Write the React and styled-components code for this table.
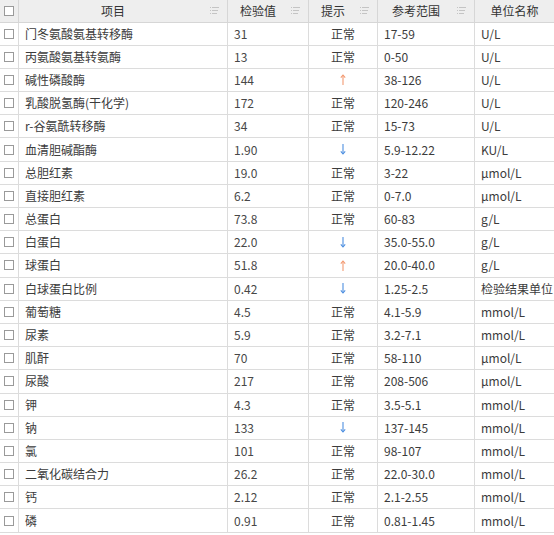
import styled, { createGlobalStyle } from 'styled-components';

const GlobalStyle = createGlobalStyle`
  html, body {
    margin: 0;
    padding: 0;
    background: #ffffff;
  }
  body {
    font-family: "Noto Sans CJK SC", "Noto Sans", sans-serif;
    font-size: 12px;
    color: #3c3c3c;
  }
`;

const COLS = '19px 209px 81px 69px 97px 1fr';

const Table = styled.div`
  width: 554px;
  display: flex;
  flex-direction: column;
`;

const HeaderRow = styled.div`
  display: grid;
  grid-template-columns: ${COLS};
  height: 22.5px;
  box-sizing: border-box;
  background: #eeeeee;
  border-bottom: 1px solid #d6d6d6;
`;

const Row = styled.div`
  display: grid;
  grid-template-columns: ${COLS};
  height: 23.2px;
  box-sizing: border-box;
  border-bottom: 1px solid #dcdcdc;
`;

const Cell = styled.div`
  display: flex;
  align-items: center;
  justify-content: ${(p) => (p.$center ? 'center' : 'flex-start')};
  padding: 0 ${(p) => (p.$center ? '0' : '6px')};
  border-right: ${(p) => (p.$last ? 'none' : '1px solid #dcdcdc')};
  white-space: nowrap;
  overflow: hidden;
  line-height: 1;
`;

const HeadCell = styled.div`
  position: relative;
  display: flex;
  align-items: center;
  justify-content: center;
  padding-right: ${(p) => (p.$sortable ? '20px' : '0')};
  border-right: ${(p) => (p.$last ? 'none' : '1px solid #d6d6d6')};
  white-space: nowrap;
  color: #333;
`;

const Check = styled.span`
  display: block;
  width: 8px;
  height: 8px;
  border: 1px solid #9a9a9a;
  background: #ffffff;
  margin: 0 auto;
`;

const SortIcon = styled.svg`
  position: absolute;
  right: 8px;
  top: 50%;
  margin-top: -4px;
`;

const ValueCell = styled(Cell)`
  color: #474747;
`;

const Sort = () => (
  <SortIcon width="9" height="8" viewBox="0 0 9 8">
    <g fill="#c4c4c4">
      <rect x="0" y="0" width="1" height="1" />
      <rect x="2" y="0" width="7" height="1" />
      <rect x="0" y="3" width="1" height="1" />
      <rect x="2" y="3" width="6" height="1" />
      <rect x="0" y="6" width="1" height="1" />
      <rect x="2" y="6" width="5" height="1" />
    </g>
  </SortIcon>
);

const Arrow = ({ up }) => {
  const color = up ? '#f39a72' : '#4d8fe0';
  return (
    <svg width="6" height="11" viewBox="0 0 6 11">
      {up ? (
        <g fill="none" stroke={color} strokeWidth="1.1">
          <line x1="3" y1="1" x2="3" y2="11" />
          <polyline points="0.8,3.6 3,1 5.2,3.6" />
        </g>
      ) : (
        <g fill="none" stroke={color} strokeWidth="1.1">
          <line x1="3" y1="0" x2="3" y2="10" />
          <polyline points="0.8,7.4 3,10 5.2,7.4" />
        </g>
      )}
    </svg>
  );
};

const rows = [
  ['门冬氨酸氨基转移酶', '31', 'n', '17-59', 'U/L'],
  ['丙氨酸氨基转氨酶', '13', 'n', '0-50', 'U/L'],
  ['碱性磷酸酶', '144', 'up', '38-126', 'U/L'],
  ['乳酸脱氢酶(干化学)', '172', 'n', '120-246', 'U/L'],
  ['r-谷氨酰转移酶', '34', 'n', '15-73', 'U/L'],
  ['血清胆碱酯酶', '1.90', 'down', '5.9-12.22', 'KU/L'],
  ['总胆红素', '19.0', 'n', '3-22', 'μmol/L'],
  ['直接胆红素', '6.2', 'n', '0-7.0', 'μmol/L'],
  ['总蛋白', '73.8', 'n', '60-83', 'g/L'],
  ['白蛋白', '22.0', 'down', '35.0-55.0', 'g/L'],
  ['球蛋白', '51.8', 'up', '20.0-40.0', 'g/L'],
  ['白球蛋白比例', '0.42', 'down', '1.25-2.5', '检验结果单位'],
  ['葡萄糖', '4.5', 'n', '4.1-5.9', 'mmol/L'],
  ['尿素', '5.9', 'n', '3.2-7.1', 'mmol/L'],
  ['肌酐', '70', 'n', '58-110', 'μmol/L'],
  ['尿酸', '217', 'n', '208-506', 'μmol/L'],
  ['钾', '4.3', 'n', '3.5-5.1', 'mmol/L'],
  ['钠', '133', 'down', '137-145', 'mmol/L'],
  ['氯', '101', 'n', '98-107', 'mmol/L'],
  ['二氧化碳结合力', '26.2', 'n', '22.0-30.0', 'mmol/L'],
  ['钙', '2.12', 'n', '2.1-2.55', 'mmol/L'],
  ['磷', '0.91', 'n', '0.81-1.45', 'mmol/L'],
];

export default function App() {
  return (
    <>
      <GlobalStyle />
      <Table>
        <HeaderRow>
          <HeadCell><Check /></HeadCell>
          <HeadCell $sortable>项目<Sort /></HeadCell>
          <HeadCell $sortable>检验值<Sort /></HeadCell>
          <HeadCell $sortable>提示<Sort /></HeadCell>
          <HeadCell $sortable>参考范围<Sort /></HeadCell>
          <HeadCell $last>单位名称</HeadCell>
        </HeaderRow>
        {rows.map(([name, value, flag, range, unit]) => (
          <Row key={name}>
            <Cell $center><Check /></Cell>
            <Cell>{name}</Cell>
            <ValueCell>{value}</ValueCell>
            <Cell $center>
              {flag === 'n' ? '正常' : <Arrow up={flag === 'up'} />}
            </Cell>
            <Cell>{range}</Cell>
            <Cell $last>{unit}</Cell>
          </Row>
        ))}
      </Table>
    </>
  );
}
